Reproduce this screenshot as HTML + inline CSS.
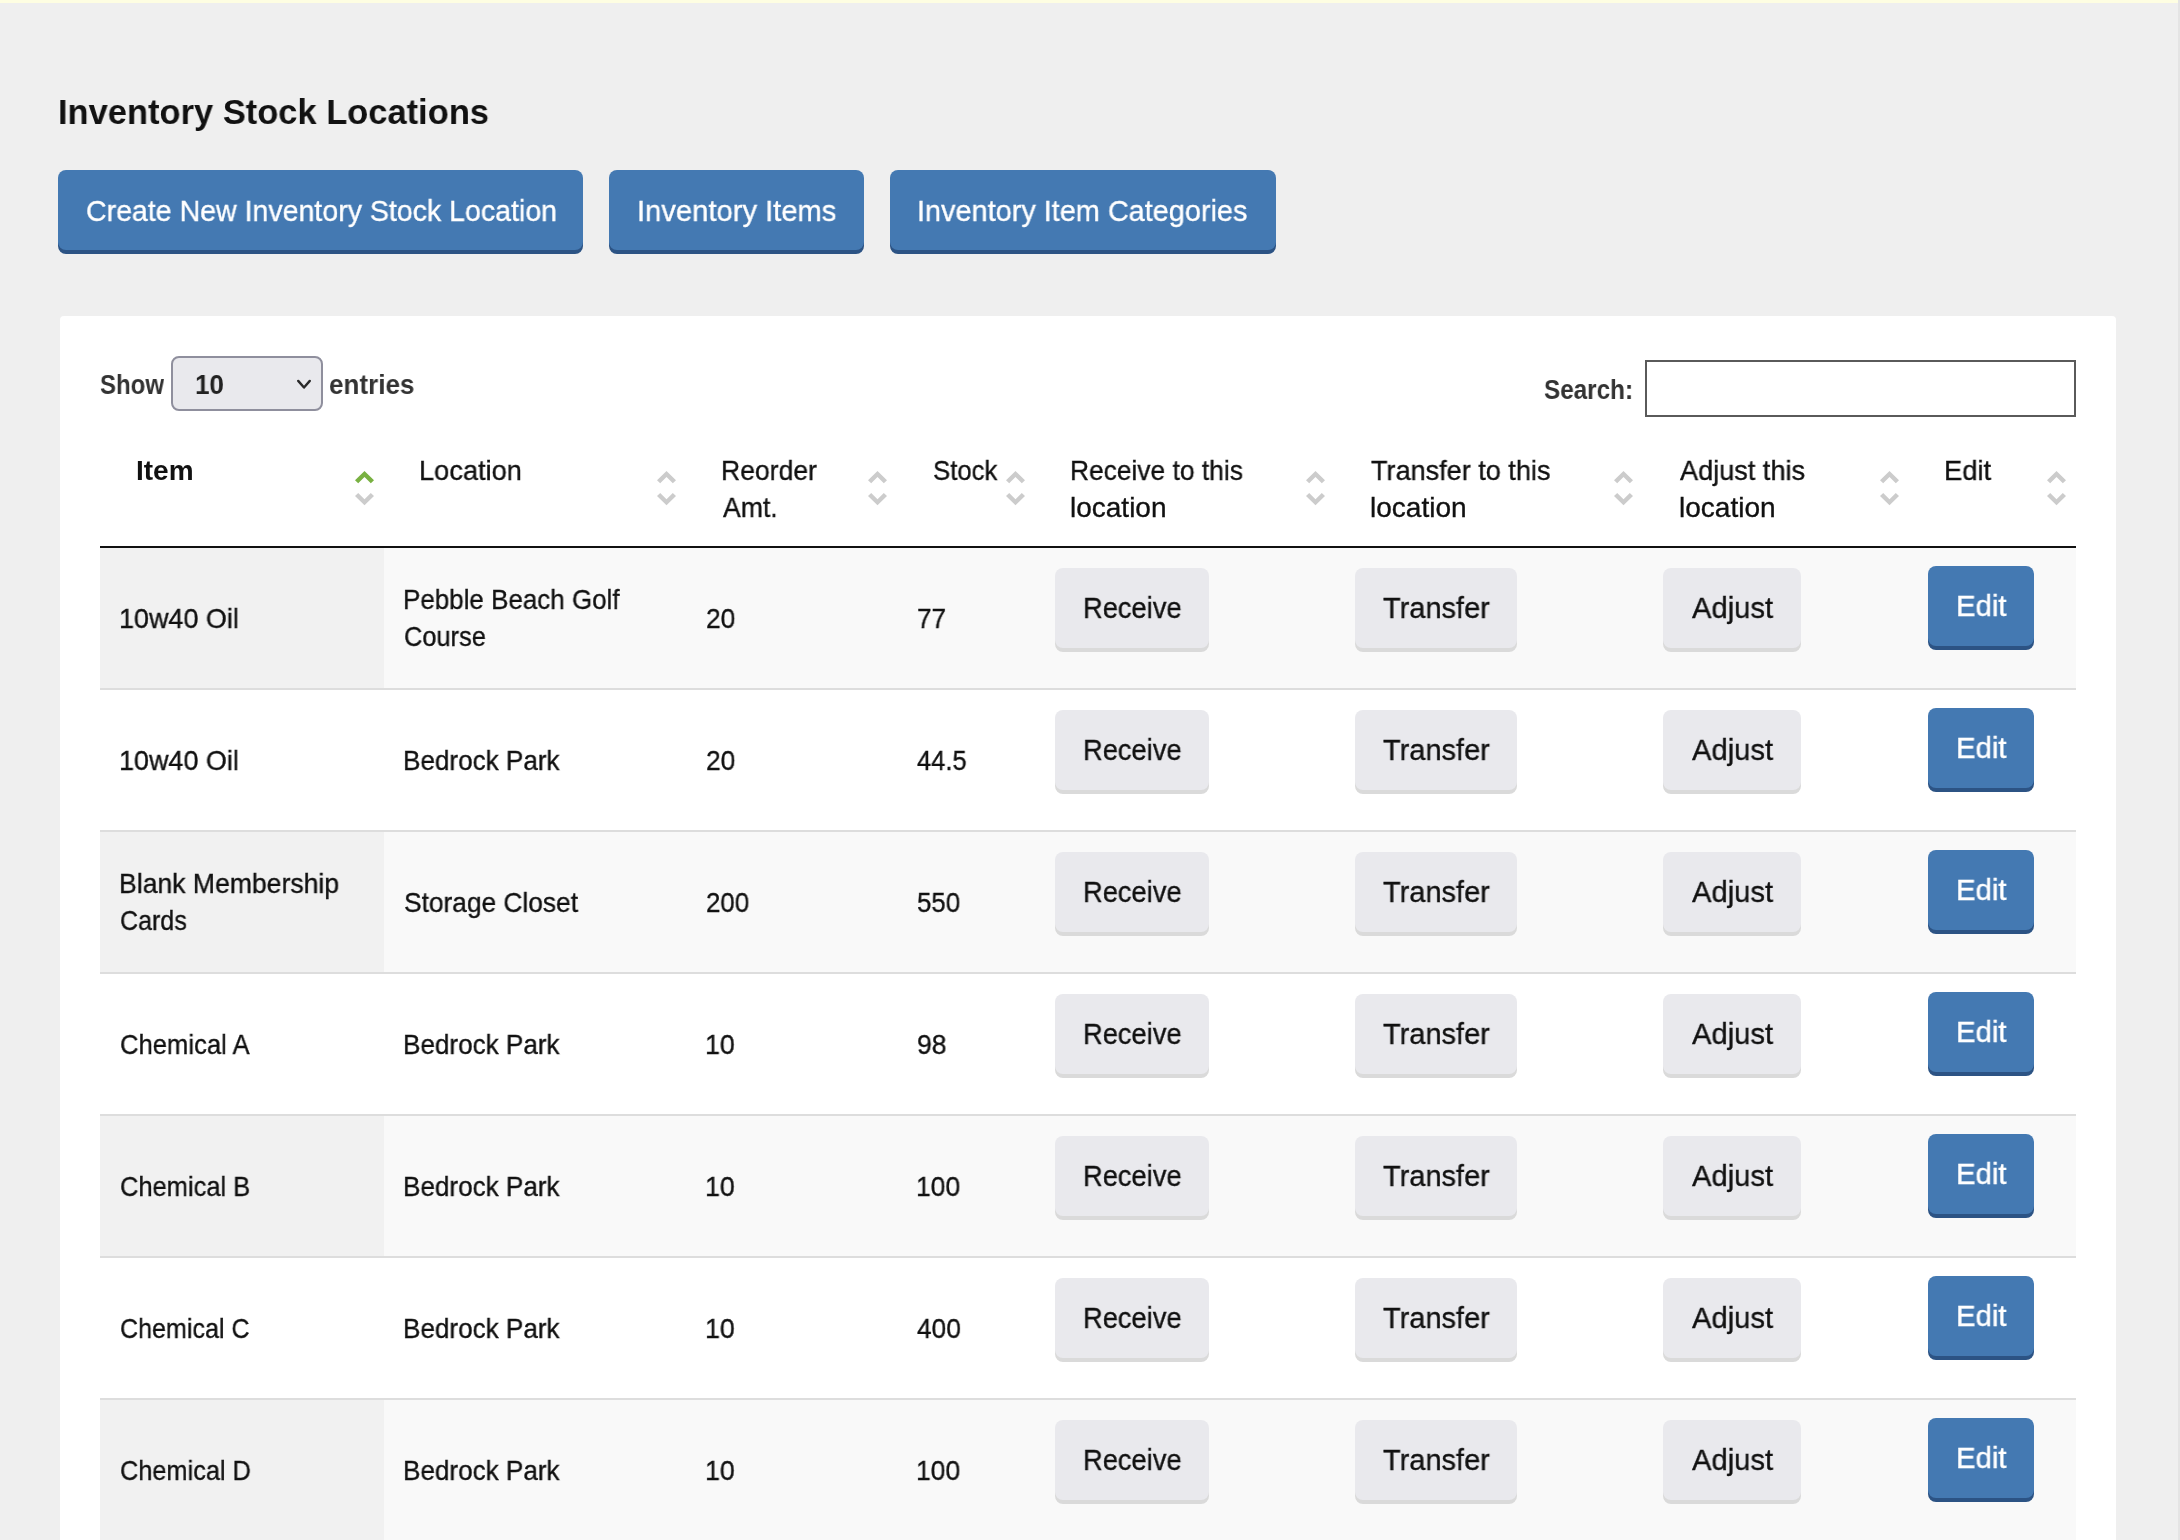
<!DOCTYPE html>
<html><head><meta charset="utf-8"><title>Inventory Stock Locations</title>
<style>
html,body{margin:0;padding:0;}
body{width:2180px;height:1540px;overflow:hidden;background:#efefef;position:relative;font-family:"Liberation Sans",sans-serif;}
.t{position:absolute;white-space:pre;line-height:1;transform-origin:0 0;font-family:"Liberation Sans",sans-serif;will-change:transform;}
.n{-webkit-text-stroke:0.35px currentColor;}
.bx{position:absolute;}
.ic{position:absolute;}
.bb{position:absolute;height:80px;background:#4479b2;border-radius:8px;box-shadow:0 4px 0 #2c5384;}
.gb{position:absolute;height:80px;background:#e9e9ed;border-radius:8px;box-shadow:0 4px 0 #dadada;}
</style></head><body>
<div class="bx" style="left:0;top:0;width:2180px;height:3px;background:#fefee2"></div>
<div class="bx" style="left:2178px;top:0;width:2px;height:1540px;background:#e4e4e4"></div>
<div class="bb" style="left:58px;top:170px;width:525px"></div>
<div class="bb" style="left:609px;top:170px;width:255px"></div>
<div class="bb" style="left:890px;top:170px;width:386px"></div>
<div class="bx" style="left:60px;top:316px;width:2056px;height:1300px;background:#fff;border-radius:4px"></div>
<div class="bx" style="left:171px;top:356px;width:148px;height:51px;border:2px solid #8f8f9d;border-radius:8px;background:#e9e9ed"></div>
<svg class="ic" style="left:295px;top:378px" width="18" height="13" viewBox="0 0 18 13"><polyline points="3.2,2.9 9,9.5 14.8,2.9" fill="none" stroke="#2a2a2a" stroke-width="2.4" stroke-linecap="round" stroke-linejoin="round"/></svg>
<div class="bx" style="left:1645px;top:360px;width:427px;height:53px;border:2px solid #5a5a5a;background:#fff"></div>
<div class="bx" style="left:100px;top:546px;width:1976px;height:2px;background:#111"></div>
<div class="bx" style="left:100px;top:548px;width:1976px;height:140px;background:#f9f9f9"></div>
<div class="bx" style="left:100px;top:548px;width:284px;height:140px;background:#f1f1f1"></div>
<div class="bx" style="left:100px;top:688px;width:1976px;height:2px;background:#dddddd"></div>
<div class="gb" style="left:1055px;top:568px;width:154px"></div>
<div class="gb" style="left:1355px;top:568px;width:162px"></div>
<div class="gb" style="left:1663px;top:568px;width:138px"></div>
<div class="bb" style="left:1928px;top:566px;width:106px"></div>
<div class="bx" style="left:100px;top:690px;width:1976px;height:140px;background:#ffffff"></div>
<div class="bx" style="left:100px;top:690px;width:284px;height:140px;background:#ffffff"></div>
<div class="bx" style="left:100px;top:830px;width:1976px;height:2px;background:#dddddd"></div>
<div class="gb" style="left:1055px;top:710px;width:154px"></div>
<div class="gb" style="left:1355px;top:710px;width:162px"></div>
<div class="gb" style="left:1663px;top:710px;width:138px"></div>
<div class="bb" style="left:1928px;top:708px;width:106px"></div>
<div class="bx" style="left:100px;top:832px;width:1976px;height:140px;background:#f9f9f9"></div>
<div class="bx" style="left:100px;top:832px;width:284px;height:140px;background:#f1f1f1"></div>
<div class="bx" style="left:100px;top:972px;width:1976px;height:2px;background:#dddddd"></div>
<div class="gb" style="left:1055px;top:852px;width:154px"></div>
<div class="gb" style="left:1355px;top:852px;width:162px"></div>
<div class="gb" style="left:1663px;top:852px;width:138px"></div>
<div class="bb" style="left:1928px;top:850px;width:106px"></div>
<div class="bx" style="left:100px;top:974px;width:1976px;height:140px;background:#ffffff"></div>
<div class="bx" style="left:100px;top:974px;width:284px;height:140px;background:#ffffff"></div>
<div class="bx" style="left:100px;top:1114px;width:1976px;height:2px;background:#dddddd"></div>
<div class="gb" style="left:1055px;top:994px;width:154px"></div>
<div class="gb" style="left:1355px;top:994px;width:162px"></div>
<div class="gb" style="left:1663px;top:994px;width:138px"></div>
<div class="bb" style="left:1928px;top:992px;width:106px"></div>
<div class="bx" style="left:100px;top:1116px;width:1976px;height:140px;background:#f9f9f9"></div>
<div class="bx" style="left:100px;top:1116px;width:284px;height:140px;background:#f1f1f1"></div>
<div class="bx" style="left:100px;top:1256px;width:1976px;height:2px;background:#dddddd"></div>
<div class="gb" style="left:1055px;top:1136px;width:154px"></div>
<div class="gb" style="left:1355px;top:1136px;width:162px"></div>
<div class="gb" style="left:1663px;top:1136px;width:138px"></div>
<div class="bb" style="left:1928px;top:1134px;width:106px"></div>
<div class="bx" style="left:100px;top:1258px;width:1976px;height:140px;background:#ffffff"></div>
<div class="bx" style="left:100px;top:1258px;width:284px;height:140px;background:#ffffff"></div>
<div class="bx" style="left:100px;top:1398px;width:1976px;height:2px;background:#dddddd"></div>
<div class="gb" style="left:1055px;top:1278px;width:154px"></div>
<div class="gb" style="left:1355px;top:1278px;width:162px"></div>
<div class="gb" style="left:1663px;top:1278px;width:138px"></div>
<div class="bb" style="left:1928px;top:1276px;width:106px"></div>
<div class="bx" style="left:100px;top:1400px;width:1976px;height:140px;background:#f9f9f9"></div>
<div class="bx" style="left:100px;top:1400px;width:284px;height:140px;background:#f1f1f1"></div>
<div class="bx" style="left:100px;top:1540px;width:1976px;height:2px;background:#dddddd"></div>
<div class="gb" style="left:1055px;top:1420px;width:154px"></div>
<div class="gb" style="left:1355px;top:1420px;width:162px"></div>
<div class="gb" style="left:1663px;top:1420px;width:138px"></div>
<div class="bb" style="left:1928px;top:1418px;width:106px"></div>
<svg class="ic" style="left:355px;top:470.8px" width="19" height="13" viewBox="0 0 19 13"><polygon fill="#79b142" points="9.5,0 19,9.3 15.8,12.3 9.5,6.1 3.2,12.3 0,9.3"/></svg>
<svg class="ic" style="left:355px;top:492.8px" width="19" height="13" viewBox="0 0 19 13"><polygon fill="#cccccc" points="3.2,0 0,3 9.5,12.3 19,3 15.8,0 9.5,6.2"/></svg>
<svg class="ic" style="left:657px;top:470.8px" width="19" height="13" viewBox="0 0 19 13"><polygon fill="#cccccc" points="9.5,0 19,9.3 15.8,12.3 9.5,6.1 3.2,12.3 0,9.3"/></svg>
<svg class="ic" style="left:657px;top:492.8px" width="19" height="13" viewBox="0 0 19 13"><polygon fill="#cccccc" points="3.2,0 0,3 9.5,12.3 19,3 15.8,0 9.5,6.2"/></svg>
<svg class="ic" style="left:868.3px;top:470.8px" width="19" height="13" viewBox="0 0 19 13"><polygon fill="#cccccc" points="9.5,0 19,9.3 15.8,12.3 9.5,6.1 3.2,12.3 0,9.3"/></svg>
<svg class="ic" style="left:868.3px;top:492.8px" width="19" height="13" viewBox="0 0 19 13"><polygon fill="#cccccc" points="3.2,0 0,3 9.5,12.3 19,3 15.8,0 9.5,6.2"/></svg>
<svg class="ic" style="left:1006.3px;top:470.8px" width="19" height="13" viewBox="0 0 19 13"><polygon fill="#cccccc" points="9.5,0 19,9.3 15.8,12.3 9.5,6.1 3.2,12.3 0,9.3"/></svg>
<svg class="ic" style="left:1006.3px;top:492.8px" width="19" height="13" viewBox="0 0 19 13"><polygon fill="#cccccc" points="3.2,0 0,3 9.5,12.3 19,3 15.8,0 9.5,6.2"/></svg>
<svg class="ic" style="left:1306.2px;top:470.8px" width="19" height="13" viewBox="0 0 19 13"><polygon fill="#cccccc" points="9.5,0 19,9.3 15.8,12.3 9.5,6.1 3.2,12.3 0,9.3"/></svg>
<svg class="ic" style="left:1306.2px;top:492.8px" width="19" height="13" viewBox="0 0 19 13"><polygon fill="#cccccc" points="3.2,0 0,3 9.5,12.3 19,3 15.8,0 9.5,6.2"/></svg>
<svg class="ic" style="left:1614.2px;top:470.8px" width="19" height="13" viewBox="0 0 19 13"><polygon fill="#cccccc" points="9.5,0 19,9.3 15.8,12.3 9.5,6.1 3.2,12.3 0,9.3"/></svg>
<svg class="ic" style="left:1614.2px;top:492.8px" width="19" height="13" viewBox="0 0 19 13"><polygon fill="#cccccc" points="3.2,0 0,3 9.5,12.3 19,3 15.8,0 9.5,6.2"/></svg>
<svg class="ic" style="left:1879.5px;top:470.8px" width="19" height="13" viewBox="0 0 19 13"><polygon fill="#cccccc" points="9.5,0 19,9.3 15.8,12.3 9.5,6.1 3.2,12.3 0,9.3"/></svg>
<svg class="ic" style="left:1879.5px;top:492.8px" width="19" height="13" viewBox="0 0 19 13"><polygon fill="#cccccc" points="3.2,0 0,3 9.5,12.3 19,3 15.8,0 9.5,6.2"/></svg>
<svg class="ic" style="left:2047.3px;top:470.8px" width="19" height="13" viewBox="0 0 19 13"><polygon fill="#cccccc" points="9.5,0 19,9.3 15.8,12.3 9.5,6.1 3.2,12.3 0,9.3"/></svg>
<svg class="ic" style="left:2047.3px;top:492.8px" width="19" height="13" viewBox="0 0 19 13"><polygon fill="#cccccc" points="3.2,0 0,3 9.5,12.3 19,3 15.8,0 9.5,6.2"/></svg>
<span class="t" style="left:58.36px;top:94.95px;font-size:35.5px;font-weight:bold;color:#111;transform:scaleX(0.9711)">Inventory Stock Locations</span>
<span class="t n" style="left:85.75px;top:196.10px;font-size:30px;font-weight:normal;color:#fff;transform:scaleX(0.9510)">Create New Inventory Stock Location</span>
<span class="t n" style="left:636.68px;top:196.10px;font-size:30px;font-weight:normal;color:#fff;transform:scaleX(0.9721)">Inventory Items</span>
<span class="t n" style="left:917.11px;top:196.10px;font-size:30px;font-weight:normal;color:#fff;transform:scaleX(0.9618)">Inventory Item Categories</span>
<span class="t" style="left:99.74px;top:370.50px;font-size:28px;font-weight:bold;color:#333;transform:scaleX(0.8568)">Show</span>
<span class="t" style="left:195.14px;top:370.50px;font-size:28px;font-weight:bold;color:#222;transform:scaleX(0.9286)">10</span>
<span class="t" style="left:329.07px;top:370.50px;font-size:28px;font-weight:bold;color:#333;transform:scaleX(0.9300)">entries</span>
<span class="t" style="left:1543.93px;top:375.50px;font-size:28px;font-weight:bold;color:#333;transform:scaleX(0.8667)">Search:</span>
<span class="t" style="left:135.71px;top:456.70px;font-size:28px;font-weight:bold;color:#111;transform:scaleX(0.9963)">Item</span>
<span class="t n" style="left:419.36px;top:456.70px;font-size:28px;font-weight:normal;color:#111;transform:scaleX(0.9716)">Location</span>
<span class="t n" style="left:721.40px;top:456.70px;font-size:28px;font-weight:normal;color:#111;transform:scaleX(0.9485)">Reorder</span>
<span class="t n" style="left:722.50px;top:493.50px;font-size:28px;font-weight:normal;color:#111;transform:scaleX(0.9500)">Amt.</span>
<span class="t n" style="left:932.68px;top:456.70px;font-size:28px;font-weight:normal;color:#111;transform:scaleX(0.9188)">Stock</span>
<span class="t n" style="left:1070.12px;top:456.70px;font-size:28px;font-weight:normal;color:#111;transform:scaleX(0.9414)">Receive to this</span>
<span class="t n" style="left:1070.00px;top:493.50px;font-size:28px;font-weight:normal;color:#111;transform:scaleX(1.0000)">location</span>
<span class="t n" style="left:1370.73px;top:456.70px;font-size:28px;font-weight:normal;color:#111;transform:scaleX(0.9663)">Transfer to this</span>
<span class="t n" style="left:1370.00px;top:493.50px;font-size:28px;font-weight:normal;color:#111;transform:scaleX(1.0022)">location</span>
<span class="t n" style="left:1680.20px;top:456.70px;font-size:28px;font-weight:normal;color:#111;transform:scaleX(0.9680)">Adjust this</span>
<span class="t n" style="left:1678.50px;top:493.50px;font-size:28px;font-weight:normal;color:#111;transform:scaleX(1.0022)">location</span>
<span class="t n" style="left:1943.55px;top:456.70px;font-size:28px;font-weight:normal;color:#111;transform:scaleX(0.9761)">Edit</span>
<span class="t n" style="left:119.27px;top:604.50px;font-size:28px;font-weight:normal;color:#111;transform:scaleX(0.9628)">10w40 Oil</span>
<span class="t n" style="left:403.05px;top:585.50px;font-size:28px;font-weight:normal;color:#111;transform:scaleX(0.9272)">Pebble Beach Golf</span>
<span class="t n" style="left:403.99px;top:622.50px;font-size:28px;font-weight:normal;color:#111;transform:scaleX(0.9068)">Course</span>
<span class="t n" style="left:706.26px;top:604.50px;font-size:28px;font-weight:normal;color:#111;transform:scaleX(0.9414)">20</span>
<span class="t n" style="left:917.07px;top:604.50px;font-size:28px;font-weight:normal;color:#111;transform:scaleX(0.9345)">77</span>
<span class="t n" style="left:1082.68px;top:593.10px;font-size:30px;font-weight:normal;color:#111;transform:scaleX(0.9095)">Receive</span>
<span class="t n" style="left:1383.03px;top:593.10px;font-size:30px;font-weight:normal;color:#111;transform:scaleX(0.9661)">Transfer</span>
<span class="t n" style="left:1691.80px;top:593.10px;font-size:30px;font-weight:normal;color:#111;transform:scaleX(0.9735)">Adjust</span>
<span class="t n" style="left:1955.54px;top:590.50px;font-size:30px;font-weight:normal;color:#fff;transform:scaleX(0.9780)">Edit</span>
<span class="t n" style="left:119.27px;top:746.50px;font-size:28px;font-weight:normal;color:#111;transform:scaleX(0.9628)">10w40 Oil</span>
<span class="t n" style="left:402.94px;top:746.50px;font-size:28px;font-weight:normal;color:#111;transform:scaleX(0.9313)">Bedrock Park</span>
<span class="t n" style="left:706.26px;top:746.50px;font-size:28px;font-weight:normal;color:#111;transform:scaleX(0.9414)">20</span>
<span class="t n" style="left:917.09px;top:746.50px;font-size:28px;font-weight:normal;color:#111;transform:scaleX(0.9094)">44.5</span>
<span class="t n" style="left:1082.68px;top:735.10px;font-size:30px;font-weight:normal;color:#111;transform:scaleX(0.9095)">Receive</span>
<span class="t n" style="left:1383.03px;top:735.10px;font-size:30px;font-weight:normal;color:#111;transform:scaleX(0.9661)">Transfer</span>
<span class="t n" style="left:1691.80px;top:735.10px;font-size:30px;font-weight:normal;color:#111;transform:scaleX(0.9735)">Adjust</span>
<span class="t n" style="left:1955.54px;top:732.50px;font-size:30px;font-weight:normal;color:#fff;transform:scaleX(0.9780)">Edit</span>
<span class="t n" style="left:119.20px;top:869.50px;font-size:28px;font-weight:normal;color:#111;transform:scaleX(0.9493)">Blank Membership</span>
<span class="t n" style="left:120.21px;top:906.50px;font-size:28px;font-weight:normal;color:#111;transform:scaleX(0.8945)">Cards</span>
<span class="t n" style="left:403.66px;top:888.50px;font-size:28px;font-weight:normal;color:#111;transform:scaleX(0.9397)">Storage Closet</span>
<span class="t n" style="left:706.28px;top:888.50px;font-size:28px;font-weight:normal;color:#111;transform:scaleX(0.9222)">200</span>
<span class="t n" style="left:917.08px;top:888.50px;font-size:28px;font-weight:normal;color:#111;transform:scaleX(0.9222)">550</span>
<span class="t n" style="left:1082.68px;top:877.10px;font-size:30px;font-weight:normal;color:#111;transform:scaleX(0.9095)">Receive</span>
<span class="t n" style="left:1383.03px;top:877.10px;font-size:30px;font-weight:normal;color:#111;transform:scaleX(0.9661)">Transfer</span>
<span class="t n" style="left:1691.80px;top:877.10px;font-size:30px;font-weight:normal;color:#111;transform:scaleX(0.9735)">Adjust</span>
<span class="t n" style="left:1955.54px;top:874.50px;font-size:30px;font-weight:normal;color:#fff;transform:scaleX(0.9780)">Edit</span>
<span class="t n" style="left:120.29px;top:1030.50px;font-size:28px;font-weight:normal;color:#111;transform:scaleX(0.9149)">Chemical A</span>
<span class="t n" style="left:402.94px;top:1030.50px;font-size:28px;font-weight:normal;color:#111;transform:scaleX(0.9313)">Bedrock Park</span>
<span class="t n" style="left:705.29px;top:1030.50px;font-size:28px;font-weight:normal;color:#111;transform:scaleX(0.9571)">10</span>
<span class="t n" style="left:917.05px;top:1030.50px;font-size:28px;font-weight:normal;color:#111;transform:scaleX(0.9483)">98</span>
<span class="t n" style="left:1082.68px;top:1019.10px;font-size:30px;font-weight:normal;color:#111;transform:scaleX(0.9095)">Receive</span>
<span class="t n" style="left:1383.03px;top:1019.10px;font-size:30px;font-weight:normal;color:#111;transform:scaleX(0.9661)">Transfer</span>
<span class="t n" style="left:1691.80px;top:1019.10px;font-size:30px;font-weight:normal;color:#111;transform:scaleX(0.9735)">Adjust</span>
<span class="t n" style="left:1955.54px;top:1016.50px;font-size:30px;font-weight:normal;color:#fff;transform:scaleX(0.9780)">Edit</span>
<span class="t n" style="left:120.29px;top:1172.50px;font-size:28px;font-weight:normal;color:#111;transform:scaleX(0.9092)">Chemical B</span>
<span class="t n" style="left:402.94px;top:1172.50px;font-size:28px;font-weight:normal;color:#111;transform:scaleX(0.9313)">Bedrock Park</span>
<span class="t n" style="left:705.29px;top:1172.50px;font-size:28px;font-weight:normal;color:#111;transform:scaleX(0.9571)">10</span>
<span class="t n" style="left:916.11px;top:1172.50px;font-size:28px;font-weight:normal;color:#111;transform:scaleX(0.9432)">100</span>
<span class="t n" style="left:1082.68px;top:1161.10px;font-size:30px;font-weight:normal;color:#111;transform:scaleX(0.9095)">Receive</span>
<span class="t n" style="left:1383.03px;top:1161.10px;font-size:30px;font-weight:normal;color:#111;transform:scaleX(0.9661)">Transfer</span>
<span class="t n" style="left:1691.80px;top:1161.10px;font-size:30px;font-weight:normal;color:#111;transform:scaleX(0.9735)">Adjust</span>
<span class="t n" style="left:1955.54px;top:1158.50px;font-size:30px;font-weight:normal;color:#fff;transform:scaleX(0.9780)">Edit</span>
<span class="t n" style="left:120.30px;top:1314.50px;font-size:28px;font-weight:normal;color:#111;transform:scaleX(0.8951)">Chemical C</span>
<span class="t n" style="left:402.94px;top:1314.50px;font-size:28px;font-weight:normal;color:#111;transform:scaleX(0.9313)">Bedrock Park</span>
<span class="t n" style="left:705.29px;top:1314.50px;font-size:28px;font-weight:normal;color:#111;transform:scaleX(0.9571)">10</span>
<span class="t n" style="left:917.06px;top:1314.50px;font-size:28px;font-weight:normal;color:#111;transform:scaleX(0.9378)">400</span>
<span class="t n" style="left:1082.68px;top:1303.10px;font-size:30px;font-weight:normal;color:#111;transform:scaleX(0.9095)">Receive</span>
<span class="t n" style="left:1383.03px;top:1303.10px;font-size:30px;font-weight:normal;color:#111;transform:scaleX(0.9661)">Transfer</span>
<span class="t n" style="left:1691.80px;top:1303.10px;font-size:30px;font-weight:normal;color:#111;transform:scaleX(0.9735)">Adjust</span>
<span class="t n" style="left:1955.54px;top:1300.50px;font-size:30px;font-weight:normal;color:#fff;transform:scaleX(0.9780)">Edit</span>
<span class="t n" style="left:120.30px;top:1456.50px;font-size:28px;font-weight:normal;color:#111;transform:scaleX(0.9042)">Chemical D</span>
<span class="t n" style="left:402.94px;top:1456.50px;font-size:28px;font-weight:normal;color:#111;transform:scaleX(0.9313)">Bedrock Park</span>
<span class="t n" style="left:705.29px;top:1456.50px;font-size:28px;font-weight:normal;color:#111;transform:scaleX(0.9571)">10</span>
<span class="t n" style="left:916.11px;top:1456.50px;font-size:28px;font-weight:normal;color:#111;transform:scaleX(0.9432)">100</span>
<span class="t n" style="left:1082.68px;top:1445.10px;font-size:30px;font-weight:normal;color:#111;transform:scaleX(0.9095)">Receive</span>
<span class="t n" style="left:1383.03px;top:1445.10px;font-size:30px;font-weight:normal;color:#111;transform:scaleX(0.9661)">Transfer</span>
<span class="t n" style="left:1691.80px;top:1445.10px;font-size:30px;font-weight:normal;color:#111;transform:scaleX(0.9735)">Adjust</span>
<span class="t n" style="left:1955.54px;top:1442.50px;font-size:30px;font-weight:normal;color:#fff;transform:scaleX(0.9780)">Edit</span>
</body></html>
